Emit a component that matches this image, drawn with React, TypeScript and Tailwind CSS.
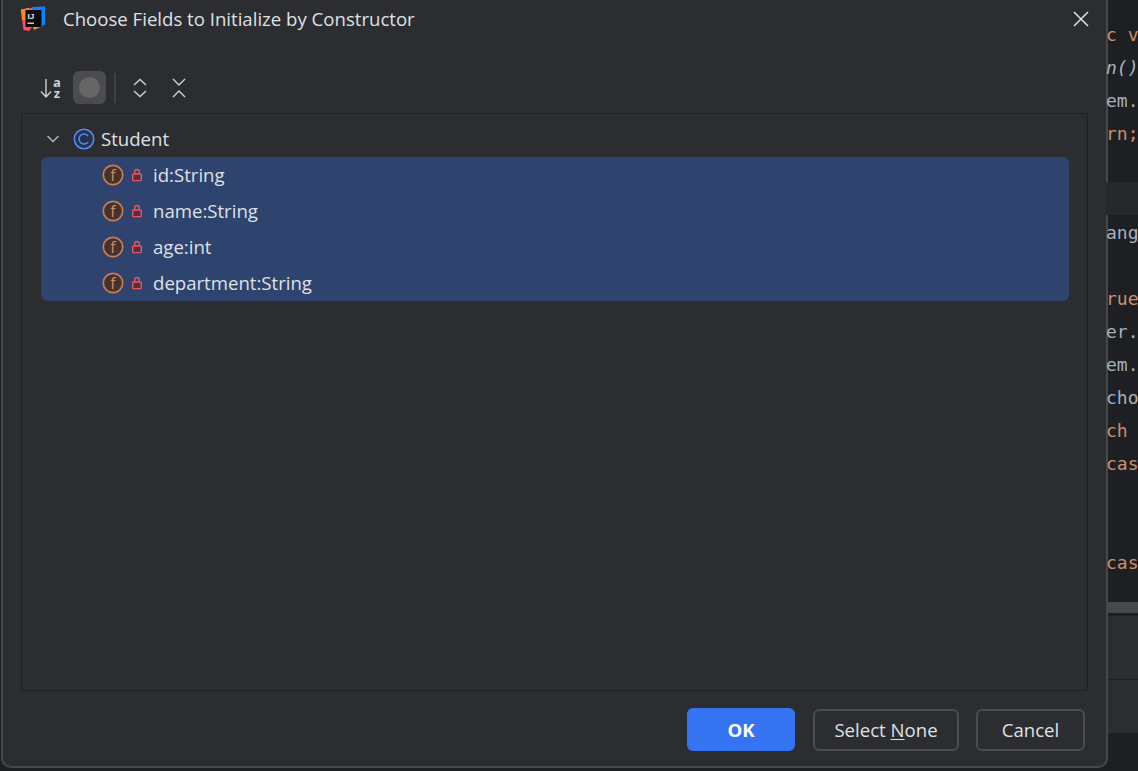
const FONT = "font-['Open_Sans','Noto_Sans',sans-serif]";

const editorLines = [
  { text: "c v", tone: "orange" },
  { text: "n()", tone: "italic" },
  { text: "em.", tone: "plain" },
  { text: "rn;", tone: "orange" },
  { text: "", tone: "plain" },
  { text: "", tone: "band" },
  { text: "ang", tone: "plain" },
  { text: "", tone: "plain" },
  { text: "rue", tone: "orange" },
  { text: "er.", tone: "plain" },
  { text: "em.", tone: "plain" },
  { text: "cho", tone: "plain" },
  { text: "ch", tone: "orange" },
  { text: "cas", tone: "orange" },
  { text: "", tone: "plain" },
  { text: "", tone: "plain" },
  { text: "cas", tone: "orange" },
];

const fields = ["id:String", "name:String", "age:int", "department:String"];

const Logo = () => (
  <svg width="26" height="26" viewBox="0 0 26 26" className="shrink-0">
    <path d="M1 3.5 L13 1.5 L13 20 L9 25 L3.5 24 Z" fill="#ff4a6a" />
    <path d="M1 3.5 L9 2 L9 14 L2 14 Z" fill="#ff8a1f" />
    <path d="M12 1 L25 0.5 L25 19 L18 19 L18 8 L12 6 Z" fill="#0a84ff" />
    <path d="M14 24 L23 20 L18 17 L12 19 Z" fill="#ff8a1f" />
    <rect x="5.5" y="4" width="16" height="17" fill="#0b0b0d" />
    <text x="7.5" y="12.5" fontSize="8" fontWeight="700" fill="#f0f0f0" fontFamily="'Liberation Sans',sans-serif">IJ</text>
    <rect x="7.5" y="16.5" width="6.5" height="1.5" fill="#c8c8c8" />
  </svg>
);

const CloseIcon = () => (
  <svg width="16" height="16" viewBox="0 0 16 16" fill="none" stroke="#dfe1e5" strokeWidth="1.5">
    <path d="M1 1 L15 15 M15 1 L1 15" />
  </svg>
);

const SortIcon = () => (
  <div className="flex h-[24px] w-[22px] items-center">
    <svg width="12" height="24" viewBox="0 0 12 24" fill="none" className="shrink-0">
      <path d="M6 3 V21 M1 15.5 L6 21 L11 15.5" stroke="#ced0d6" strokeWidth="1.4" />
    </svg>
    <div className="ml-px flex flex-col items-center text-[13px] font-bold leading-[11px] text-[#ced0d6]">
      <span>a</span>
      <span>z</span>
    </div>
  </div>
);

const ExpandIcon = () => (
  <svg width="16" height="22" viewBox="0 0 16 22" fill="none" stroke="#ced0d6" strokeWidth="1.4">
    <path d="M2 8 L8 2.5 L14 8 M2 14 L8 19.5 L14 14" />
  </svg>
);

const CollapseIcon = () => (
  <svg width="16" height="22" viewBox="0 0 16 22" fill="none" stroke="#ced0d6" strokeWidth="1.4">
    <path d="M2 2 L8 8 L14 2 M2 20 L8 14 L14 20" />
  </svg>
);

const TreeChevron = () => (
  <svg width="14" height="10" viewBox="0 0 14 10" fill="none" stroke="#b4b8bf" strokeWidth="1.4">
    <path d="M1.5 2 L7 7.5 L12.5 2" />
  </svg>
);

const ClassIcon = () => (
  <svg width="22" height="22" viewBox="0 0 22 22" fill="none">
    <circle cx="11" cy="11" r="9.7" fill="#25324d" stroke="#548af7" strokeWidth="1.6" />
    <path d="M15 8 A5 5 0 1 0 15 14" stroke="#548af7" strokeWidth="1.5" />
  </svg>
);

const FieldIcon = () => (
  <svg width="22" height="22" viewBox="0 0 22 22" fill="none">
    <circle cx="11" cy="11" r="9.7" fill="#45322b" stroke="#c77d55" strokeWidth="1.7" />
    <text x="11" y="16.5" textAnchor="middle" fontSize="16" fill="#d08a62" fontFamily="'Open Sans',sans-serif">f</text>
  </svg>
);

const LockIcon = () => (
  <svg width="12" height="14" viewBox="0 0 12 14" fill="none">
    <rect x="1.7" y="6" width="8.6" height="6.6" rx="0.8" fill="#5a2d3a" stroke="#e55765" strokeWidth="1.4" />
    <path d="M3.7 6 V3.8 A2.3 2.3 0 0 1 8.3 3.8 V6" stroke="#e55765" strokeWidth="1.4" />
  </svg>
);

const EditorLine = ({ text, tone }: { text: string; tone: string }) => {
  const color =
    tone === "orange" ? "text-[#cf8e6d]" : tone === "italic" ? "text-[#a9b7c6] italic" : "text-[#a4b1bf]";
  return (
    <div className={`h-[33px] leading-[33px] whitespace-pre ${color} ${tone === "band" ? "-mt-[1px] mb-[1px] bg-[#26282b]" : ""}`}>
      {text}
    </div>
  );
};

const App = () => {
  return (
    <div className={`flex h-[771px] w-[1138px] overflow-hidden bg-[#1e1f22] ${FONT}`}>
      {/* Dialog */}
      <div className="ml-[1px] flex h-[768px] w-[1107px] shrink-0 flex-col rounded-b-[10px] border-x-2 border-b-2 border-[#46484b] bg-[#2b2d30]">
        <div className="flex h-[38px] shrink-0 items-center pl-[17px] pr-[17px]">
          <Logo />
          <span className="ml-[17px] text-[18.6px] text-[#dfe1e5]">Choose Fields to Initialize by Constructor</span>
          <span className="ml-auto flex">
            <CloseIcon />
          </span>
        </div>

        <div className="mt-[33px] flex h-[33px] shrink-0 items-center pl-[37px]">
          <SortIcon />
          <div className="ml-[11px] flex h-[33px] w-[33px] items-center justify-center rounded-[6px] bg-[#4a4c50]">
            <div className="h-[21px] w-[21px] rounded-full bg-[#666765]" />
          </div>
          <div className="ml-[8px] h-[30px] w-[2px] bg-[#3f4145]" />
          <div className="ml-[16px]">
            <ExpandIcon />
          </div>
          <div className="ml-[23px]">
            <CollapseIcon />
          </div>
        </div>

        {/* Tree */}
        <div className="ml-[18px] mt-[9px] h-[578px] w-[1067px] shrink-0 border border-[#1e1f22] pt-[8px]">
          <div className="flex h-[35px] items-center pb-px pl-[24px]">
            <TreeChevron />
            <div className="ml-[13px]">
              <ClassIcon />
            </div>
            <span className="ml-[6px] text-[18.6px] text-[#dfe1e5]">Student</span>
          </div>
          <div className="ml-[19px] w-[1028px] rounded-[6px] bg-[#2e436e]">
            {fields.map((name) => (
              <div key={name} className="flex h-[36px] items-center pl-[61px]">
                <FieldIcon />
                <div className="ml-[7px] flex">
                  <LockIcon />
                </div>
                <span className="ml-[10px] text-[18.6px] text-[#dfe1e5]">{name}</span>
              </div>
            ))}
          </div>
        </div>

        {/* Buttons */}
        <div className="mt-[17px] flex items-center pl-[684px]">
          <button className="h-[43px] w-[108px] rounded-[6px] bg-[#3574f0] text-[18.6px] font-bold text-white">OK</button>
          <button className="ml-[18px] h-[42px] w-[146px] rounded-[6px] border-2 border-[#4b4d52] text-[18.6px] text-[#dfe1e5]">
            Select <span className="underline underline-offset-2">N</span>one
          </button>
          <button className="ml-[17px] h-[42px] w-[109px] rounded-[6px] border-2 border-[#4b4d52] text-[18.6px] text-[#dfe1e5]">
            Cancel
          </button>
        </div>
      </div>

      {/* Editor behind the dialog */}
      <div className="-ml-[2px] flex h-[771px] min-w-0 flex-1 flex-col font-['DejaVu_Sans_Mono',monospace] text-[18px]">
        <div className="h-[602px] shrink-0 overflow-hidden pt-[18px]">
          {editorLines.map((line, i) => (
            <EditorLine key={i} text={line.text} tone={line.tone} />
          ))}
        </div>
        <div className="ml-[2px] h-[11px] shrink-0 bg-[#46484b]" />
        <div className="h-[3px] shrink-0" />
        <div className="ml-[2px] h-[64px] shrink-0 border-b border-[#1e1f22] bg-[#2b2d30]" />
        <div className="ml-[2px] h-[53px] shrink-0 bg-[#2b2d30]" />
      </div>
    </div>
  );
};

export default App;
